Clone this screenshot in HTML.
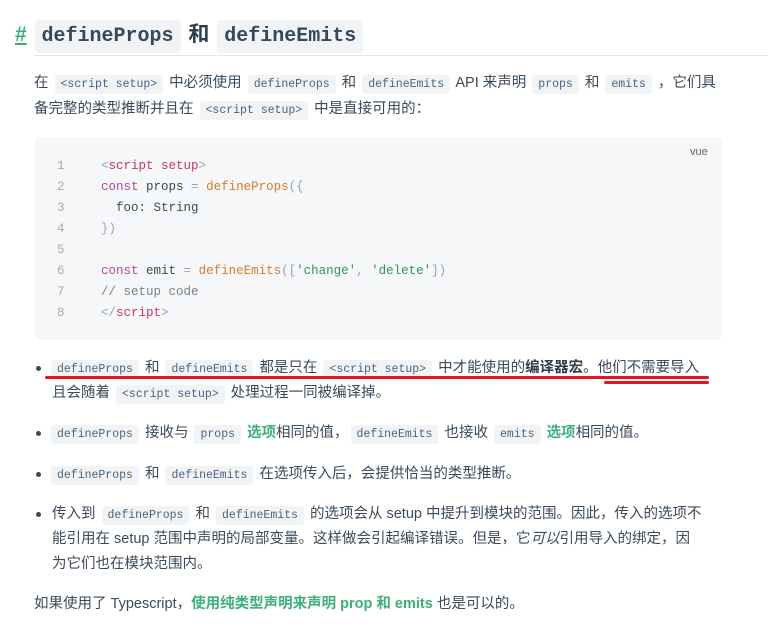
<!DOCTYPE html>
<html><head><meta charset="utf-8"><style>
body{margin:0;background:#fff;width:768px;height:626px;overflow:hidden;position:relative;font-family:"Liberation Sans","Noto Sans CJK SC",sans-serif;color:#3a4a5a;font-size:14.5px}
.l{position:absolute;white-space:nowrap;line-height:20px}
code{font-family:"Liberation Mono","DejaVu Sans Mono",monospace;font-size:11.5px;background:#f1f3f5;color:#476582;padding:3px 6px;border-radius:3px;margin:0 2px}
.g{color:#3eaf7c;font-weight:bold}
.dot{position:absolute;width:5px;height:5px;border-radius:50%;background:#3a4a5a}
.h code{font-size:20px;font-weight:bold;padding:5px 7px;color:#34495e}
.cb{position:absolute;left:34px;top:137px;width:688px;height:203px;background:#f6f7f8;border-radius:6px}
.cl{position:absolute;font-family:"Liberation Mono","DejaVu Sans Mono",monospace;font-size:12.5px;white-space:pre;line-height:21px;color:#3a4a5a}
.n{color:#aaa;left:57px}
.k{color:#b04a9f}.f{color:#d77b2c}.s{color:#2f9558}.t{color:#c8385d}.p{color:#9aa0c8}.c{color:#7a828a}
.red{position:absolute;background:#e4151f;height:3px;border-radius:2px}
</style></head><body>
<div class="l h" style="left:15px;top:20px;line-height:30px;font-size:21px;font-weight:bold;color:#2c3e50"><span style="color:#3eaf7c;text-decoration:underline">#</span> <code>defineProps</code> 和 <code>defineEmits</code></div>
<div style="position:absolute;left:34px;top:55px;width:734px;height:1px;background:#e4e6e8"></div>
<div class="l" style="left:34px;top:73px">在 <code>&lt;script setup&gt;</code> 中必须使用 <code>defineProps</code> 和 <code>defineEmits</code> API 来声明 <code>props</code> 和 <code>emits</code> ，它们具</div>
<div class="l" style="left:34px;top:99px">备完整的类型推断并且在 <code>&lt;script setup&gt;</code> 中是直接可用的：</div>
<div class="cb"></div>
<div class="cl" style="left:690px;top:142px;font-size:11px;color:#666;font-family:'Liberation Sans',sans-serif">vue</div>
<div class="cl n" style="top:156px">1
2
3
4
5
6
7
8</div>
<div class="cl" style="left:101px;top:156px"><span class="p">&lt;</span><span class="t">script setup</span><span class="p">&gt;</span>
<span class="k">const</span> props <span class="p">=</span> <span class="f">defineProps</span><span class="p">({</span>
  foo: String
<span class="p">})</span>

<span class="k">const</span> emit <span class="p">=</span> <span class="f">defineEmits</span><span class="p">([</span><span class="s">'change'</span><span class="p">,</span> <span class="s">'delete'</span><span class="p">])</span>
<span class="c">// setup code</span>
<span class="p">&lt;/</span><span class="t">script</span><span class="p">&gt;</span></div>
<div class="dot" style="left:36px;top:366px"></div>
<div class="l" style="left:49px;top:358px"><code>defineProps</code> 和 <code>defineEmits</code> 都是只在 <code>&lt;script setup&gt;</code> 中才能使用的<b style="color:#2c3e50">编译器宏</b>。他们不需要导入</div>
<div class="l" style="left:52px;top:383px">且会随着 <code>&lt;script setup&gt;</code> 处理过程一同被编译掉。</div>
<div class="red" style="left:45px;top:376px;width:664px"></div>
<div class="red" style="left:604px;top:381px;width:105px"></div>
<div class="dot" style="left:36px;top:431px"></div>
<div class="l" style="left:49px;top:423px"><code>defineProps</code> 接收与 <code>props</code> <span class="g">选项</span>相同的值，<code>defineEmits</code> 也接收 <code>emits</code> <span class="g">选项</span>相同的值。</div>
<div class="dot" style="left:36px;top:472px"></div>
<div class="l" style="left:49px;top:464px"><code>defineProps</code> 和 <code>defineEmits</code> 在选项传入后，会提供恰当的类型推断。</div>
<div class="dot" style="left:36px;top:512px"></div>
<div class="l" style="left:52px;top:504px">传入到 <code>defineProps</code> 和 <code>defineEmits</code> 的选项会从 setup 中提升到模块的范围。因此，传入的选项不</div>
<div class="l" style="left:52px;top:529px">能引用在 setup 范围中声明的局部变量。这样做会引起编译错误。但是，它<i>可以</i>引用导入的绑定，因</div>
<div class="l" style="left:52px;top:554px">为它们也在模块范围内。</div>
<div class="l" style="left:34px;top:594px">如果使用了 Typescript，<span class="g">使用纯类型声明来声明 prop 和 emits</span> 也是可以的。</div>
</body></html>
